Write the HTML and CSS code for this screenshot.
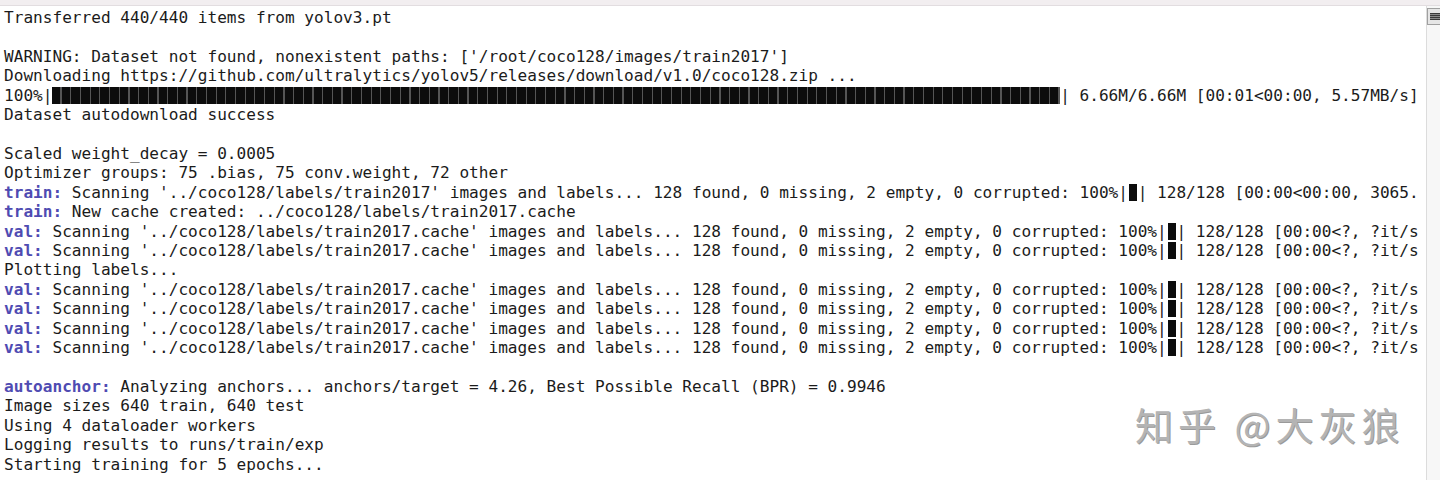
FILE: index.html
```html
<!DOCTYPE html>
<html lang="en">
<head>
<meta charset="utf-8">
<title>Terminal</title>
<link rel="stylesheet" href="styles.css">
</head>
<body>
<div class="window">
  <div class="topbar"></div>
  <div class="main">
    <div class="term">
      <div class="ln">Transferred 440/440 items from yolov3.pt</div>
      <div class="ln"> </div>
      <div class="ln">WARNING: Dataset not found, nonexistent paths: ['/root/coco128/images/train2017']</div>
      <div class="ln">Downloading https://github.com/ultralytics/yolov5/releases/download/v1.0/coco128.zip ...</div>
      <div class="ln">100%|<span class="bar"></span>| 6.66M/6.66M [00:01&lt;00:00, 5.57MB/s]</div>
      <div class="ln">Dataset autodownload success</div>
      <div class="ln"> </div>
      <div class="ln">Scaled weight_decay = 0.0005</div>
      <div class="ln">Optimizer groups: 75 .bias, 75 conv.weight, 72 other</div>
      <div class="ln"><b class="tag">train:</b> Scanning '../coco128/labels/train2017' images and labels... 128 found, 0 missing, 2 empty, 0 corrupted: 100%|<span class="blk"></span>| 128/128 [00:00&lt;00:00, 3065.</div>
      <div class="ln"><b class="tag">train:</b> New cache created: ../coco128/labels/train2017.cache</div>
      <div class="ln"><b class="tag">val:</b> Scanning '../coco128/labels/train2017.cache' images and labels... 128 found, 0 missing, 2 empty, 0 corrupted: 100%|<span class="blk"></span>| 128/128 [00:00&lt;?, ?it/s</div>
      <div class="ln"><b class="tag">val:</b> Scanning '../coco128/labels/train2017.cache' images and labels... 128 found, 0 missing, 2 empty, 0 corrupted: 100%|<span class="blk"></span>| 128/128 [00:00&lt;?, ?it/s</div>
      <div class="ln">Plotting labels...</div>
      <div class="ln"><b class="tag">val:</b> Scanning '../coco128/labels/train2017.cache' images and labels... 128 found, 0 missing, 2 empty, 0 corrupted: 100%|<span class="blk"></span>| 128/128 [00:00&lt;?, ?it/s</div>
      <div class="ln"><b class="tag">val:</b> Scanning '../coco128/labels/train2017.cache' images and labels... 128 found, 0 missing, 2 empty, 0 corrupted: 100%|<span class="blk"></span>| 128/128 [00:00&lt;?, ?it/s</div>
      <div class="ln"><b class="tag">val:</b> Scanning '../coco128/labels/train2017.cache' images and labels... 128 found, 0 missing, 2 empty, 0 corrupted: 100%|<span class="blk"></span>| 128/128 [00:00&lt;?, ?it/s</div>
      <div class="ln"><b class="tag">val:</b> Scanning '../coco128/labels/train2017.cache' images and labels... 128 found, 0 missing, 2 empty, 0 corrupted: 100%|<span class="blk"></span>| 128/128 [00:00&lt;?, ?it/s</div>
      <div class="ln"> </div>
      <div class="ln"><b class="tag">autoanchor:</b> Analyzing anchors... anchors/target = 4.26, Best Possible Recall (BPR) = 0.9946</div>
      <div class="ln">Image sizes 640 train, 640 test</div>
      <div class="ln">Using 4 dataloader workers</div>
      <div class="ln">Logging results to runs/train/exp</div>
      <div class="ln">Starting training for 5 epochs...</div>
      <div class="watermark">知乎 @大灰狼</div>
    </div>
    <div class="scroll">
      <div class="scroll-btn"><span class="scroll-glyph"></span></div>
    </div>
  </div>
</div>
</body>
</html>
```
FILE: styles.css
```css
html, body {
  margin: 0;
  padding: 0;
  background: #ffffff;
}

.window {
  width: 1440px;
  height: 480px;
  display: flex;
  flex-direction: column;
  overflow: hidden;
}

.topbar {
  height: 5px;
  background: #f2eef0;
  border-bottom: 1px solid #e2dde0;
  flex: none;
}

.main {
  flex: 1;
  display: flex;
  min-height: 0;
}

.term {
  position: relative;
  flex: 1;
  padding: 2px 0 0 4px;
  font-family: "DejaVu Sans Mono", "Liberation Mono", monospace;
  font-size: 16.1px;
  line-height: 19.43px;
  color: #1b1b1b;
  overflow: hidden;
}

.ln {
  white-space: pre;
  height: 19.43px;
}

.tag {
  color: #4f4bb2;
  font-weight: bold;
}

.bar {
  display: inline-block;
  width: 104ch;
  height: 17px;
  vertical-align: -3px;
  background: repeating-linear-gradient(to right, #0c0c0c 0, #0c0c0c calc(1ch - 1.2px), #555555 calc(1ch - 1.2px), #555555 1ch);
}

.blk {
  display: inline-block;
  width: 1ch;
  height: 17px;
  vertical-align: -3px;
  background: linear-gradient(#0c0c0c, #0c0c0c) center / 8px 100% no-repeat;
}

.watermark {
  position: absolute;
  left: 1135px;
  top: 396px;
  font-family: "Noto Sans CJK SC", sans-serif;
  font-size: 38px;
  line-height: 44px;
  letter-spacing: 5px;
  color: #b4b4b4;
  text-shadow: 1px 1px 0 #9a9a9a;
  white-space: pre;
}

.scroll {
  width: 13px;
  flex: none;
  background: #f7f7f7;
  border-left: 1px solid #dcdcdc;
  padding-top: 2px;
}

.scroll-btn {
  height: 15px;
  border: 1px solid #a0a0a0;
  border-right: none;
  background: #e6e6e6;
  display: flex;
  align-items: center;
  padding-left: 2px;
}

.scroll-glyph {
  display: block;
  width: 11px;
  height: 7px;
  background: repeating-linear-gradient(#3a3a3a 0 1px, #8a8a8a 1px 2px);
}
```
